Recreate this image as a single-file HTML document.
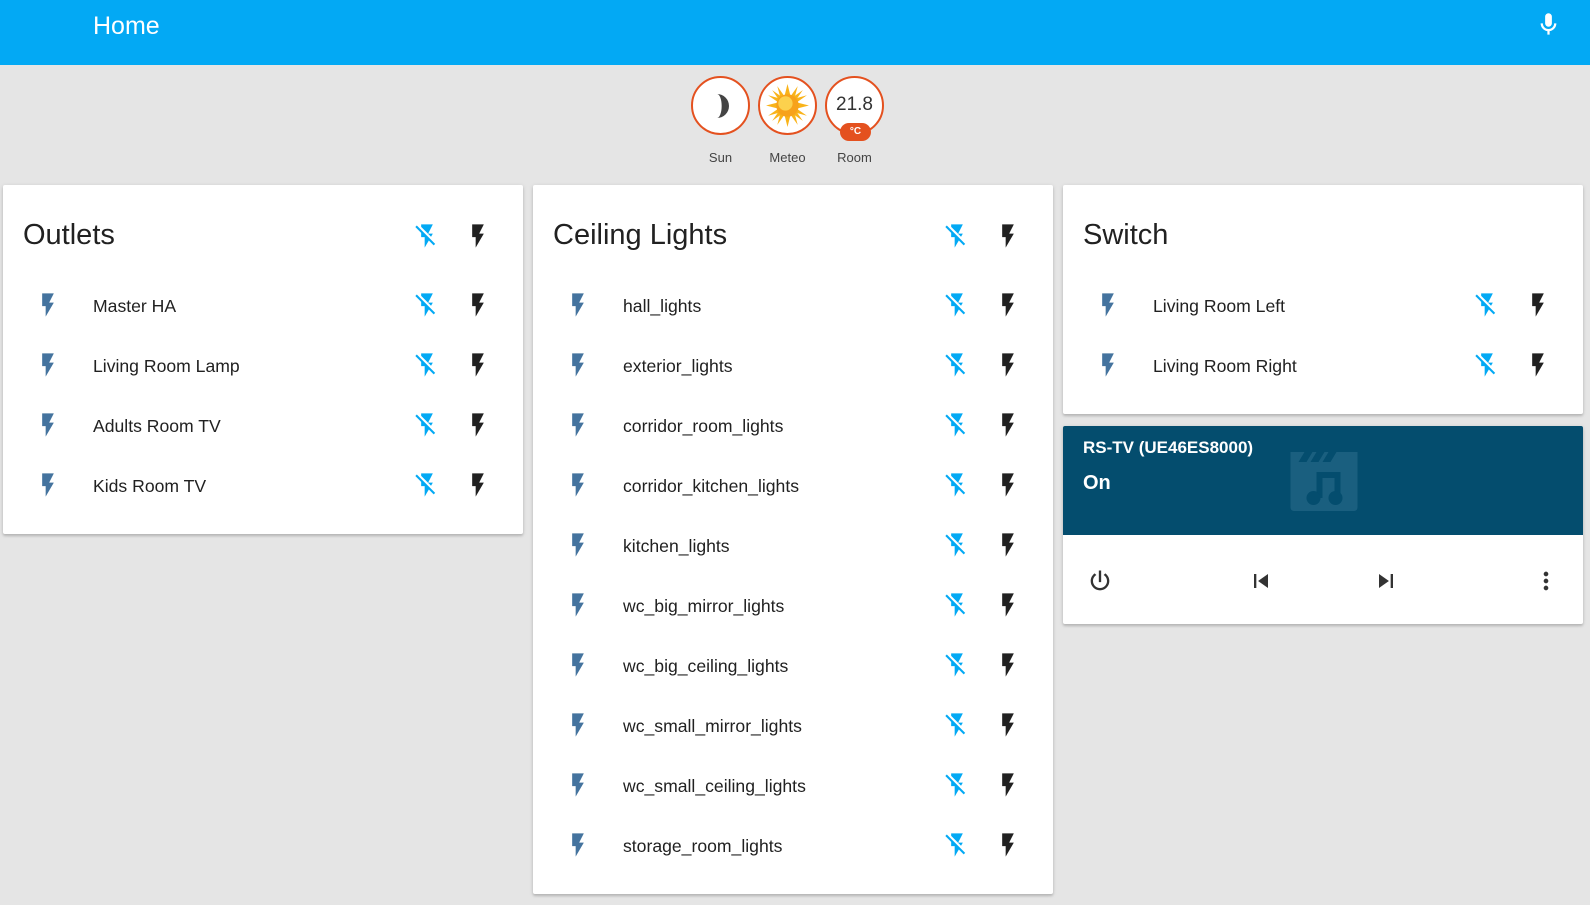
<!DOCTYPE html>
<html><head><meta charset="utf-8"><style>
*{box-sizing:border-box;margin:0;padding:0}
body{width:1590px;height:905px;background:#e5e5e5;font-family:"Liberation Sans",sans-serif;color:#212121;overflow:hidden;position:relative}
.hdr{position:absolute;left:0;top:0;width:1590px;height:65px;background:#03a9f4;color:#fff}
.hdr .t{position:absolute;left:93px;top:12px;font-size:25px}
.card{position:absolute;background:#fff;border-radius:2px;box-shadow:0 2px 2px rgba(0,0,0,.14),0 1px 5px rgba(0,0,0,.12)}
.title{position:absolute;left:20px;top:34px;font-size:29px;color:#212121}
.row{position:absolute;left:0;width:100%;height:40px}
.row .n{position:absolute;left:90px;top:11px;font-size:17.6px}
svg.i{position:absolute;width:28px;height:28px}
.badge{position:absolute;top:76px;width:59px;height:59px;border:2px solid #e4511f;border-radius:50%;background:#fff;text-align:center}
.bl{position:absolute;top:150px;width:59px;text-align:center;font-size:13px;color:#444}
</style></head><body>
<div class="hdr"><div class="t">Home</div>
<svg style="position:absolute;left:1535px;top:11px;width:27px;height:27px" viewBox="0 0 24 24"><path fill="#fff" d="M12,2A3,3 0 0,1 15,5V11A3,3 0 0,1 12,14A3,3 0 0,1 9,11V5A3,3 0 0,1 12,2M19,11C19,14.53 16.39,17.44 13,17.93V21H11V17.93C7.61,17.44 5,14.53 5,11H7A5,5 0 0,0 12,16A5,5 0 0,0 17,11H19Z"/></svg></div>

<div class="badge" style="left:691px"><svg style="position:absolute;left:12px;top:12px;width:32px;height:32px" viewBox="0 0 24 24"><path fill="#444" d="M9,3 A9,9 0 0 1 9,21 A3.5,9 0 0 0 9,3Z"/></svg></div>
<div class="badge" style="left:758px"><svg style="position:absolute;left:4px;top:4px;width:47px;height:47px" viewBox="0 0 46 46"><g fill="#f9b319"><polygon points="23,2 26,14 20,14"/><polygon points="23,44 26,32 20,32"/><polygon points="2,23 14,26 14,20"/><polygon points="44,23 32,26 32,20"/><polygon points="8,8 18,15 15,18"/><polygon points="38,38 28,31 31,28"/><polygon points="38,8 31,18 28,15"/><polygon points="8,38 15,28 18,31"/><polygon points="13,4 20,14 16,15"/><polygon points="33,4 26,14 30,15"/><polygon points="13,42 20,32 16,31"/><polygon points="33,42 26,32 30,31"/><polygon points="4,13 14,20 15,16"/><polygon points="42,13 32,20 31,16"/><polygon points="4,33 14,26 15,30"/><polygon points="42,33 32,26 31,30"/></g><circle cx="23" cy="23" r="11" fill="#f7a21b"/><circle cx="21" cy="21" r="7" fill="#fcd14d"/></svg></div>
<div class="badge" style="left:825px"><div style="font-size:19px;color:#333;margin-top:16px">21.8</div><div style="position:absolute;left:13px;top:45px;width:31px;height:18px;border-radius:9px;background:#e4511f;color:#fff;font-size:10px;font-weight:bold;line-height:18px">°C</div></div>
<div class="bl" style="left:691px">Sun</div><div class="bl" style="left:758px">Meteo</div><div class="bl" style="left:825px">Room</div>

<svg width="0" height="0" style="position:absolute"><defs>
<path id="fl" d="M7,2V13H10V22L17,10H13L17,2H7Z"/>
<path id="fo" d="M17,10H13L17,2H7V4.18L15.46,12.64M3.27,3L2,4.27L7,9.27V13H10V22L13.58,15.86L17.73,20L19,18.73L3.27,3Z"/>
</defs></svg>

<div class="card" style="left:3px;top:185px;width:520px;height:349px">
<div class="title">Outlets</div>
<svg class="i" style="left:410px;top:37px" viewBox="0 0 24 24"><use href="#fo" fill="#03a9f4"/></svg><svg class="i" style="left:461px;top:37px" viewBox="0 0 24 24"><use href="#fl" fill="#212121"/></svg>
<div class="row" style="top:100px"><svg class="i" style="left:31px;top:6px" viewBox="0 0 24 24"><use href="#fl" fill="#44739e"/></svg><div class="n">Master HA</div><svg class="i" style="left:410px;top:6px" viewBox="0 0 24 24"><use href="#fo" fill="#03a9f4"/></svg><svg class="i" style="left:461px;top:6px" viewBox="0 0 24 24"><use href="#fl" fill="#212121"/></svg></div>
<div class="row" style="top:160px"><svg class="i" style="left:31px;top:6px" viewBox="0 0 24 24"><use href="#fl" fill="#44739e"/></svg><div class="n">Living Room Lamp</div><svg class="i" style="left:410px;top:6px" viewBox="0 0 24 24"><use href="#fo" fill="#03a9f4"/></svg><svg class="i" style="left:461px;top:6px" viewBox="0 0 24 24"><use href="#fl" fill="#212121"/></svg></div>
<div class="row" style="top:220px"><svg class="i" style="left:31px;top:6px" viewBox="0 0 24 24"><use href="#fl" fill="#44739e"/></svg><div class="n">Adults Room TV</div><svg class="i" style="left:410px;top:6px" viewBox="0 0 24 24"><use href="#fo" fill="#03a9f4"/></svg><svg class="i" style="left:461px;top:6px" viewBox="0 0 24 24"><use href="#fl" fill="#212121"/></svg></div>
<div class="row" style="top:280px"><svg class="i" style="left:31px;top:6px" viewBox="0 0 24 24"><use href="#fl" fill="#44739e"/></svg><div class="n">Kids Room TV</div><svg class="i" style="left:410px;top:6px" viewBox="0 0 24 24"><use href="#fo" fill="#03a9f4"/></svg><svg class="i" style="left:461px;top:6px" viewBox="0 0 24 24"><use href="#fl" fill="#212121"/></svg></div>
</div>

<div class="card" style="left:533px;top:185px;width:520px;height:709px">
<div class="title">Ceiling Lights</div>
<svg class="i" style="left:410px;top:37px" viewBox="0 0 24 24"><use href="#fo" fill="#03a9f4"/></svg><svg class="i" style="left:461px;top:37px" viewBox="0 0 24 24"><use href="#fl" fill="#212121"/></svg>
<div class="row" style="top:100px"><svg class="i" style="left:31px;top:6px" viewBox="0 0 24 24"><use href="#fl" fill="#44739e"/></svg><div class="n">hall_lights</div><svg class="i" style="left:410px;top:6px" viewBox="0 0 24 24"><use href="#fo" fill="#03a9f4"/></svg><svg class="i" style="left:461px;top:6px" viewBox="0 0 24 24"><use href="#fl" fill="#212121"/></svg></div>
<div class="row" style="top:160px"><svg class="i" style="left:31px;top:6px" viewBox="0 0 24 24"><use href="#fl" fill="#44739e"/></svg><div class="n">exterior_lights</div><svg class="i" style="left:410px;top:6px" viewBox="0 0 24 24"><use href="#fo" fill="#03a9f4"/></svg><svg class="i" style="left:461px;top:6px" viewBox="0 0 24 24"><use href="#fl" fill="#212121"/></svg></div>
<div class="row" style="top:220px"><svg class="i" style="left:31px;top:6px" viewBox="0 0 24 24"><use href="#fl" fill="#44739e"/></svg><div class="n">corridor_room_lights</div><svg class="i" style="left:410px;top:6px" viewBox="0 0 24 24"><use href="#fo" fill="#03a9f4"/></svg><svg class="i" style="left:461px;top:6px" viewBox="0 0 24 24"><use href="#fl" fill="#212121"/></svg></div>
<div class="row" style="top:280px"><svg class="i" style="left:31px;top:6px" viewBox="0 0 24 24"><use href="#fl" fill="#44739e"/></svg><div class="n">corridor_kitchen_lights</div><svg class="i" style="left:410px;top:6px" viewBox="0 0 24 24"><use href="#fo" fill="#03a9f4"/></svg><svg class="i" style="left:461px;top:6px" viewBox="0 0 24 24"><use href="#fl" fill="#212121"/></svg></div>
<div class="row" style="top:340px"><svg class="i" style="left:31px;top:6px" viewBox="0 0 24 24"><use href="#fl" fill="#44739e"/></svg><div class="n">kitchen_lights</div><svg class="i" style="left:410px;top:6px" viewBox="0 0 24 24"><use href="#fo" fill="#03a9f4"/></svg><svg class="i" style="left:461px;top:6px" viewBox="0 0 24 24"><use href="#fl" fill="#212121"/></svg></div>
<div class="row" style="top:400px"><svg class="i" style="left:31px;top:6px" viewBox="0 0 24 24"><use href="#fl" fill="#44739e"/></svg><div class="n">wc_big_mirror_lights</div><svg class="i" style="left:410px;top:6px" viewBox="0 0 24 24"><use href="#fo" fill="#03a9f4"/></svg><svg class="i" style="left:461px;top:6px" viewBox="0 0 24 24"><use href="#fl" fill="#212121"/></svg></div>
<div class="row" style="top:460px"><svg class="i" style="left:31px;top:6px" viewBox="0 0 24 24"><use href="#fl" fill="#44739e"/></svg><div class="n">wc_big_ceiling_lights</div><svg class="i" style="left:410px;top:6px" viewBox="0 0 24 24"><use href="#fo" fill="#03a9f4"/></svg><svg class="i" style="left:461px;top:6px" viewBox="0 0 24 24"><use href="#fl" fill="#212121"/></svg></div>
<div class="row" style="top:520px"><svg class="i" style="left:31px;top:6px" viewBox="0 0 24 24"><use href="#fl" fill="#44739e"/></svg><div class="n">wc_small_mirror_lights</div><svg class="i" style="left:410px;top:6px" viewBox="0 0 24 24"><use href="#fo" fill="#03a9f4"/></svg><svg class="i" style="left:461px;top:6px" viewBox="0 0 24 24"><use href="#fl" fill="#212121"/></svg></div>
<div class="row" style="top:580px"><svg class="i" style="left:31px;top:6px" viewBox="0 0 24 24"><use href="#fl" fill="#44739e"/></svg><div class="n">wc_small_ceiling_lights</div><svg class="i" style="left:410px;top:6px" viewBox="0 0 24 24"><use href="#fo" fill="#03a9f4"/></svg><svg class="i" style="left:461px;top:6px" viewBox="0 0 24 24"><use href="#fl" fill="#212121"/></svg></div>
<div class="row" style="top:640px"><svg class="i" style="left:31px;top:6px" viewBox="0 0 24 24"><use href="#fl" fill="#44739e"/></svg><div class="n">storage_room_lights</div><svg class="i" style="left:410px;top:6px" viewBox="0 0 24 24"><use href="#fo" fill="#03a9f4"/></svg><svg class="i" style="left:461px;top:6px" viewBox="0 0 24 24"><use href="#fl" fill="#212121"/></svg></div>
</div>

<div class="card" style="left:1063px;top:185px;width:520px;height:229px">
<div class="title">Switch</div>
<div class="row" style="top:100px"><svg class="i" style="left:31px;top:6px" viewBox="0 0 24 24"><use href="#fl" fill="#44739e"/></svg><div class="n">Living Room Left</div><svg class="i" style="left:410px;top:6px" viewBox="0 0 24 24"><use href="#fo" fill="#03a9f4"/></svg><svg class="i" style="left:461px;top:6px" viewBox="0 0 24 24"><use href="#fl" fill="#212121"/></svg></div>
<div class="row" style="top:160px"><svg class="i" style="left:31px;top:6px" viewBox="0 0 24 24"><use href="#fl" fill="#44739e"/></svg><div class="n">Living Room Right</div><svg class="i" style="left:410px;top:6px" viewBox="0 0 24 24"><use href="#fo" fill="#03a9f4"/></svg><svg class="i" style="left:461px;top:6px" viewBox="0 0 24 24"><use href="#fl" fill="#212121"/></svg></div>
</div>

<div class="card" style="left:1063px;top:426px;width:520px;height:198px;overflow:hidden">
<div style="position:absolute;left:0;top:0;width:520px;height:109px;background:#044d6e">
<svg style="position:absolute;left:223px;top:22px;width:76px;height:63px" viewBox="0 0 75 63"><path fill="#1a5f7f" d="M4,4H18L12,14H20L26,4H30L24,14H32L38,4H42L36,14H44L50,4H71V59Q71,63 67,63H8Q4,63 4,59Z"/><g fill="#044d6e"><rect x="48" y="24" width="6" height="26"/><rect x="30" y="24" width="24" height="6"/><rect x="30" y="24" width="6" height="26"/><circle cx="27" cy="50" r="7"/><circle cx="49" cy="50" r="7"/></g></svg>
<div style="position:absolute;left:20px;top:12px;color:#fff;font-size:17px;font-weight:bold">RS-TV (UE46ES8000)</div>
<div style="position:absolute;left:20px;top:46px;color:#fff;font-size:20px;font-weight:bold">On</div>
</div>
<svg class="i" style="left:23px;top:141px" viewBox="0 0 24 24"><path fill="#333" d="M16.56,5.44L15.11,6.89C16.84,7.94 18,9.830 18,12A6,6 0 0,1 12,18A6,6 0 0,1 6,12C6,9.83 7.16,7.94 8.88,6.88L7.44,5.44C5.36,6.88 4,9.28 4,12A8,8 0 0,0 12,20A8,8 0 0,0 20,12C20,9.28 18.64,6.88 16.56,5.44M13,3H11V13H13"/></svg>
<svg class="i" style="left:184px;top:141px" viewBox="0 0 24 24"><path fill="#333" d="M6,18V6H8V18H6M9.5,12L18,6V18L9.5,12Z"/></svg>
<svg class="i" style="left:309px;top:141px" viewBox="0 0 24 24"><path fill="#333" d="M16,18H18V6H16M6,18L14.5,12L6,6V18Z"/></svg>
<svg class="i" style="left:469px;top:141px" viewBox="0 0 24 24"><path fill="#333" d="M12,16A2,2 0 0,1 14,18A2,2 0 0,1 12,20A2,2 0 0,1 10,18A2,2 0 0,1 12,16M12,10A2,2 0 0,1 14,12A2,2 0 0,1 12,14A2,2 0 0,1 10,12A2,2 0 0,1 12,10M12,4A2,2 0 0,1 14,6A2,2 0 0,1 12,8A2,2 0 0,1 10,6A2,2 0 0,1 12,4Z"/></svg>
</div>
</body></html>
